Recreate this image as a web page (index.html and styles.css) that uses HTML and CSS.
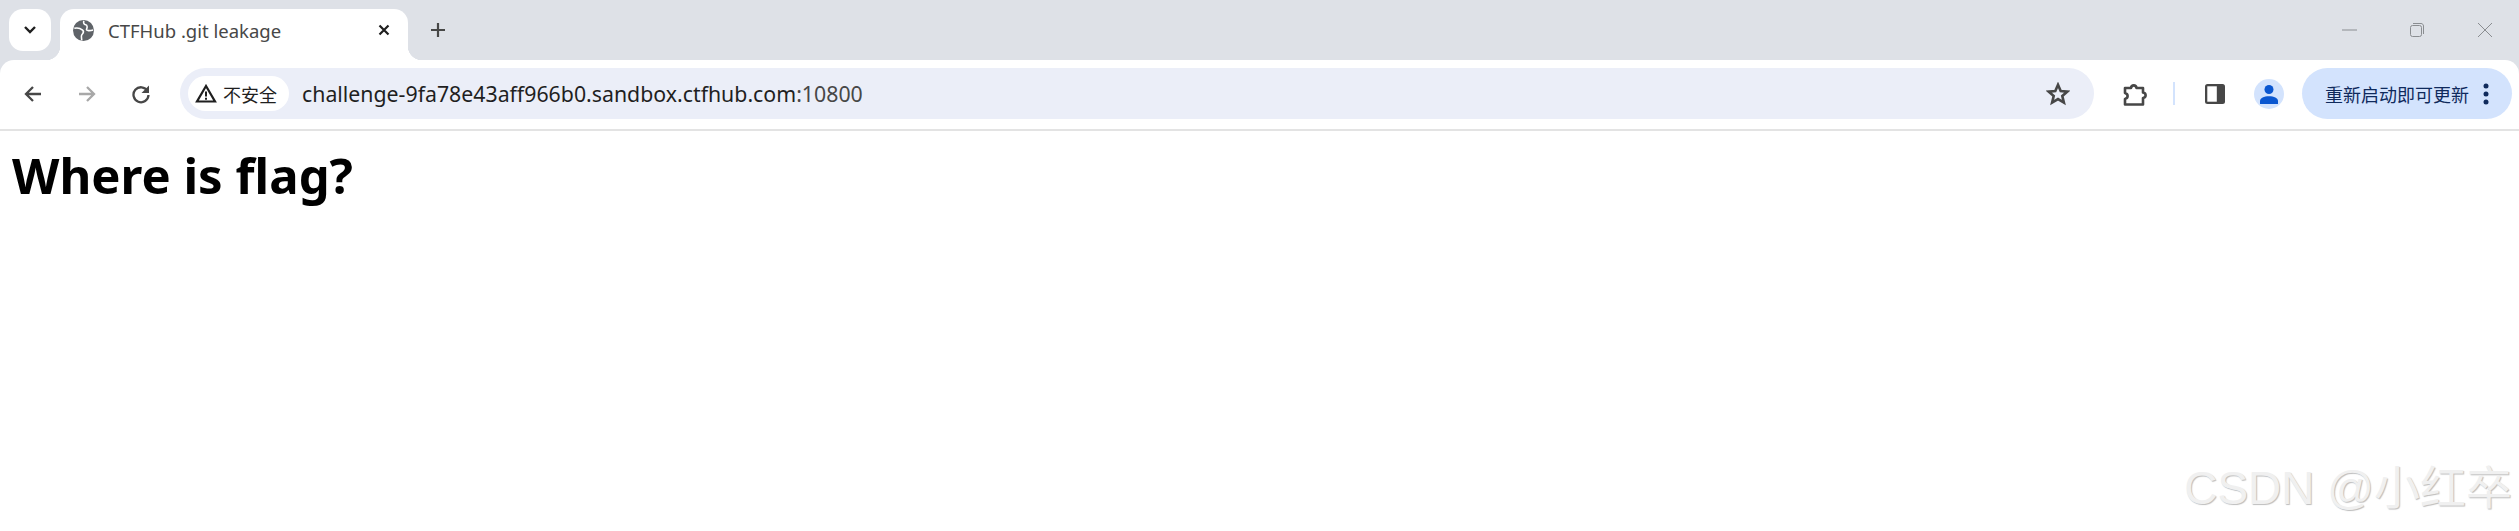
FILE: index.html
```html
<!DOCTYPE html>
<html lang="zh-CN">
<head>
<meta charset="utf-8">
<title>CTFHub .git leakage</title>
<link rel="stylesheet" href="styles.css">
</head>
<body>
<div class="browser">
  <header class="tabstrip">
    <button class="tabsearch"><svg width="14" height="10" viewBox="0 0 14 10"><path d="M2 2l5 5 5-5" fill="none" stroke="#1f1f1f" stroke-width="2.4"/></svg></button>
    <div class="tab">
      <svg class="favicon" width="21" height="21" viewBox="0 0 24 24"><circle cx="12" cy="12" r="12" fill="#5f6368"/><path d="M1.500 9.500c4-1 7 0 9.500 2s0 4-1 5.500 0 4 0 6M12.500 1c-1 2 0 4 2 4.500s2 3 1 5 4 2 7.500 1" fill="none" stroke="#fff" stroke-width="1.800"/></svg>
      <span class="tabtitle">CTFHub .git leakage</span>
      <svg class="tabclose" width="12" height="12" viewBox="0 0 12 12"><path d="M1.500 1.500l9 9M10.500 1.500l-9 9" stroke="#1f1f1f" stroke-width="2.200" fill="none"/></svg>
    </div>
    <svg class="newtab" width="16" height="16" viewBox="0 0 16 16"><path d="M8 1v14M1 8h14" stroke="#474747" stroke-width="2.200" fill="none"/></svg>
    <div class="winctl">
      <svg width="16" height="16" viewBox="0 0 16 16"><path d="M1 8h15" stroke="#8a8d91" stroke-width="1" fill="none"/></svg>
      <svg width="16" height="16" viewBox="0 0 16 16"><rect x="1.500" y="3.500" width="11" height="11" rx="2" stroke="#8a8d91" fill="none"/><path d="M4 1.500h8c1.400 0 2.500 1.100 2.500 2.500v8" stroke="#8a8d91" fill="none"/></svg>
      <svg width="16" height="16" viewBox="0 0 16 16"><path d="M1 1l14 14M15 1L1 15" stroke="#8a8d91" stroke-width="1" fill="none"/></svg>
    </div>
  </header>
  <nav class="toolbar">
    <svg class="navicon" width="20" height="20" viewBox="0 0 20 20"><path d="M18 10H3.500M10 3l-7 7 7 7" stroke="#474747" stroke-width="2.300" fill="none"/></svg>
    <svg class="navicon" width="20" height="20" viewBox="0 0 20 20"><path d="M2 10h14.500M10 3l7 7-7 7" stroke="#a8a8a8" stroke-width="2.300" fill="none"/></svg>
    <svg class="navicon" width="20" height="20" viewBox="0 0 20 20"><path d="M16.500 7A7.500 7.500 0 1 0 17.500 11" stroke="#474747" stroke-width="2.300" fill="none"/><path d="M18 1.500V9h-7.500z" fill="#474747"/></svg>
    <div class="omnibox">
      <div class="chip">
        <svg width="22" height="19" viewBox="0 0 22 19"><path d="M11 2L2 17.500h18z" fill="none" stroke="#1f1f1f" stroke-width="2.200"/><path d="M11 7.500v5M11 13.700v2" stroke="#1f1f1f" stroke-width="2"/></svg>
        <span class="chiptext">不安全</span>
      </div>
      <span class="url">challenge-9fa78e43aff966b0.sandbox.ctfhub.com<span class="port">:10800</span></span>
      <svg class="star" width="24" height="24" viewBox="0 0 24 24"><path d="M12 2.800l2.700 6.200 6.700.6-5.100 4.400 1.600 6.600L12 17.100l-5.900 3.500 1.600-6.600-5.100-4.400 6.700-.6z" fill="none" stroke="#474747" stroke-width="2.600"/></svg>
    </div>
    <svg class="ext" width="24" height="24" viewBox="0 0 24 24"><path d="M2 6h6c.5-3.500 5-3.500 5.500 0H20v4.500c3.500.5 3.500 5 0 5.500v6.500H2V17c3.500-1 3.500-5 0-6z" fill="none" stroke="#474747" stroke-width="2.600" stroke-linejoin="round"/></svg>
    <span class="sep"></span>
    <svg class="panel" width="22" height="22" viewBox="0 0 22 22"><rect x="1" y="1" width="20" height="20" rx="2.500" fill="#474747"/><rect x="3.300" y="3.300" width="9.500" height="15.400" fill="#fff"/></svg>
    <span class="avatar"><svg width="20" height="20" viewBox="0 0 20 20"><circle cx="10" cy="5.500" r="4.500" fill="#0b57d0"/><path d="M1 20v-3c0-3 4-4.800 9-4.800s9 1.800 9 4.800v3z" fill="#0b57d0"/></svg></span>
    <div class="update">
      <span class="updatetext">重新启动即可更新</span>
      <svg width="6" height="22" viewBox="0 0 6 22"><circle cx="3" cy="3" r="2.500" fill="#0f2a5c"/><circle cx="3" cy="11" r="2.500" fill="#0f2a5c"/><circle cx="3" cy="19" r="2.500" fill="#0f2a5c"/></svg>
    </div>
  </nav>
  <main class="page">
    <h1 class="heading">Where is flag?</h1>
  </main>
</div>
<div class="watermark">CSDN @小红卒</div>
</body>
</html>
```
FILE: styles.css
```css
* { box-sizing: border-box; }
html, body { margin: 0; height: 100%; }
body {
  background: #fff;
  font-family: "Noto Sans", "Noto Sans CJK SC", sans-serif;
  overflow: hidden;
  position: relative;
}
.browser { display: flex; flex-direction: column; height: 100%; background: #dee1e7; }
.tabstrip { display: flex; align-items: flex-start; height: 60px; padding: 9px 0 0 9px; flex: none; }
.tabsearch {
  width: 42px; height: 42px; border: 0; padding: 0; background: #fff; border-radius: 14px;
  display: flex; align-items: center; justify-content: center; flex: none;
}
.tab {
  position: relative; width: 348px; height: 51px; margin-left: 9px; flex: none;
  background: #fff; border-radius: 14px 14px 0 0;
  display: flex; align-items: center; padding: 0 0 9px 13px;
}
.tab::before, .tab::after { content: ""; position: absolute; bottom: 0; width: 14px; height: 14px; }
.tab::before { left: -14px; background: radial-gradient(circle at 0 0, transparent 14px, #fff 14.500px); }
.tab::after { right: -14px; background: radial-gradient(circle at 100% 0, transparent 14px, #fff 14.500px); }
.tabtitle { margin-left: 14px; font-size: 18.500px; color: #474747; white-space: nowrap; flex: 1; }
.tabclose { margin-right: 18px; flex: none; }
.newtab { margin: 13px 0 0 22px; flex: none; }
.winctl { margin-left: auto; margin-top: 13px; padding-right: 26px; display: flex; gap: 52px; }
.toolbar {
  height: 71px; flex: none; background: #fff; border-radius: 14px 14px 0 0;
  border-bottom: 2px solid #e3e3e3; display: flex; align-items: center;
  padding: 0 8px 2px 23px; position: relative;
}
.navicon { flex: none; margin-right: 34px; }
.navicon:nth-child(3) { margin-right: 29px; }
.omnibox {
  width: 1914px; height: 51px; background: #ebeef8; border-radius: 26px; flex: none;
  display: flex; align-items: center; padding: 0 24px 0 8px;
}
.chip {
  height: 35px; width: 101px; background: #fff; border-radius: 18px; flex: none;
  display: flex; align-items: center; gap: 6px; padding-left: 7px;
}
.chiptext { font-size: 18px; color: #1f1f1f; }
.url { margin-left: 13px; font-size: 21.300px; color: #1f1f1f; white-space: nowrap; flex: 1; }
.port { color: #474747; }
.star { flex: none; }
.ext { margin-left: 29px; flex: none; }
.sep { width: 2px; height: 23px; background: #d3e3fd; margin-left: 26px; flex: none; }
.panel { margin-left: 29px; flex: none; }
.avatar {
  width: 30px; height: 30px; border-radius: 50%; background: #d3e3fd; margin-left: 28px; flex: none;
  display: flex; align-items: center; justify-content: center;
}
.update {
  margin-left: 18px; width: 210px; height: 51px; background: #d3e3fd; border-radius: 26px; flex: none;
  display: flex; align-items: center; padding-left: 23px; gap: 14px;
}
.updatetext { font-size: 18px; color: #0f2a5c; white-space: nowrap; }
.page { flex: 1; background: #fff; padding: 13px 12px 0; }
.heading { margin: 0; font-size: 49px; font-weight: 700; color: #000; line-height: 1.300; }
.watermark {
  position: absolute; right: 7px; bottom: 14px;
  font-family: "Liberation Sans", "Noto Sans CJK SC", sans-serif;
  font-size: 46px; color: #f0f0f0; white-space: nowrap;
  text-shadow: 1px 1px 1px #bdbdbd;
}
```
